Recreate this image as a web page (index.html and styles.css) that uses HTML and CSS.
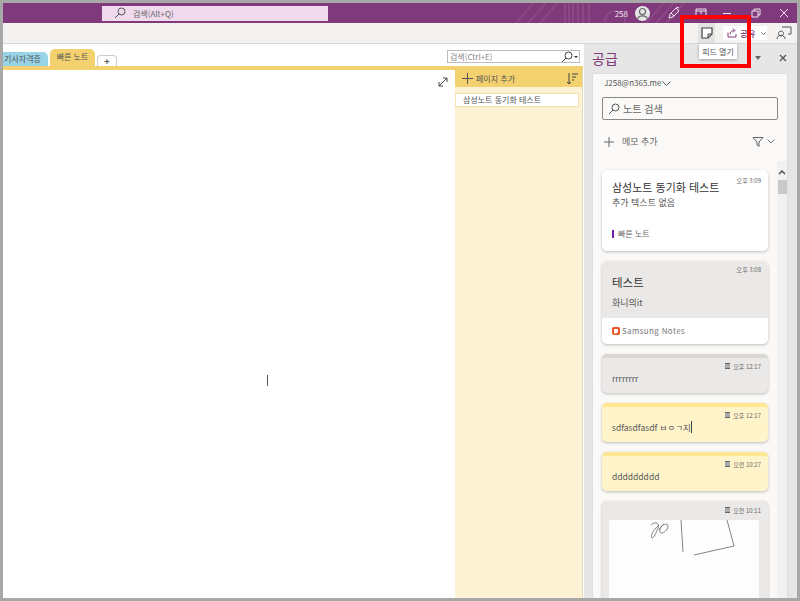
FILE: index.html
```html
<!DOCTYPE html>
<html lang="ko">
<head>
	<meta charset="utf-8">
	<title>OneNote</title>
	<link rel="stylesheet" href="styles.css">
</head>
<body>
	<div class="window">
		<div class="titlebar">
			<svg class="title-art" width="200" height="20" viewBox="0 0 200 20">
				<g fill="none" stroke="#8a4885" stroke-width="2">
					<path d="M10 24L34 -4M22 24L46 -4M34 24L58 -4"/>
					<path d="M62 0v20M66 0v20M70 0v20M75 0v20M80 0v20M86 0v20"/>
					<circle cx="112" cy="18" r="10"/>
					<path d="M140 24L164 -4M150 24L174 -4M160 24L184 -4"/>
				</g>
			</svg>
			<div class="title-search">
				<svg width="12" height="12" viewBox="0 0 12 12"><circle cx="7.5" cy="4.5" r="3.5" fill="none" stroke="#555" stroke-width="1"/><path d="M5 7L1 11" stroke="#555"/></svg>
				<span>검색(Alt+Q)</span>
			</div>
			<div class="title-right">
				<span class="user-name">258</span>
				<span class="avatar">
					<svg width="15" height="15" viewBox="0 0 15 15"><circle cx="7.5" cy="5.500" r="3" fill="none" stroke="#666" stroke-width="1.2"/><path d="M2.5 14c0-5.500 10-5.500 10 0" fill="none" stroke="#666" stroke-width="1.2"/></svg>
				</span>
				<svg class="pen" width="14" height="14" viewBox="0 0 14 14"><path d="M2 12l1-4 6-6 3 3-6 6zM9 1l3 1M4 7l3 3" fill="none" stroke="#f0e4ee"/></svg>
				<svg class="ribbon-toggle" width="12" height="10" viewBox="0 0 12 10"><path d="M1 1h10v8H1zM1 3h10M6 3v3" fill="none" stroke="#f0e4ee"/></svg>
				<span class="win-min"></span>
				<svg class="win-restore" width="10" height="10" viewBox="0 0 10 10"><path d="M1 3h6v6H1zM3 3V1h6v6H7" fill="none" stroke="#f0e4ee"/></svg>
				<svg class="win-close" width="10" height="10" viewBox="0 0 10 10"><path d="M1 1l8 8M9 1l-8 8" stroke="#f0e4ee"/></svg>
			</div>
		</div>

		<div class="ribbon">
			<span class="feed-btn">
				<svg width="12" height="12" viewBox="0 0 12 12"><path d="M1 1h10v6l-4 4H1z" fill="#fff" stroke="#444" stroke-width="1.2"/><path d="M11 7H7v4" fill="none" stroke="#444"/></svg>
			</span>
			<div class="share-btn">
				<svg width="10" height="10" viewBox="0 0 10 10"><path d="M1 4.500v4.500h8V6M3 6.500c0-2.500 2-4 4-4M6 .5l2 2-2 2" fill="none" stroke="#80397b"/></svg>
				<span>공유</span>
				<svg class="share-arrow" width="5" height="3" viewBox="0 0 5 3"><path d="M.5.5l2 2 2-2" fill="none" stroke="#666"/></svg>
			</div>
			<svg class="people" width="16" height="14" viewBox="0 0 16 14"><path d="M6 1h9v7h-3M5 5a2.500 2.500 0 1 0 .1 0M1 13c0-5 8-5 8 0" fill="none" stroke="#555"/></svg>
		</div>

		<div class="main">
			<div class="notebook">
				<div class="tabs">
					<div class="tab-list">
						<span class="tab tab-blue">기사자격증</span>
						<span class="tab tab-yellow">빠른 노트</span>
						<span class="tab tab-add">+</span>
					</div>
					<div class="page-search">
						<span>검색(Ctrl+E)</span>
						<svg width="12" height="12" viewBox="0 0 12 12"><circle cx="7.5" cy="4.5" r="3.5" fill="none" stroke="#444"/><path d="M5 7L1 11" stroke="#444"/></svg>
						<i></i>
					</div>
				</div>
				<div class="section-line"></div>
				<div class="section">
					<div class="page">
						<svg class="expand" width="10" height="10" viewBox="0 0 10 10"><path d="M1 9l8-8M5 1h4v4M1 5v4h4" fill="none" stroke="#444"/></svg>
						<span class="caret"></span>
					</div>
					<div class="pages">
						<div class="pages-head">
							<svg class="plus" width="11" height="11" viewBox="0 0 11 11"><path d="M5.500 0v11M0 5.500h11" stroke="#555"/></svg>
							<span class="add-page">페이지 추가</span>
							<svg width="12" height="12" viewBox="0 0 12 12"><path d="M3 0v11M1 9l2 2 2-2M6 1h6M6 4h4M6 7h2" fill="none" stroke="#444"/></svg>
						</div>
						<div class="page-item">삼성노트 동기화 테스트</div>
					</div>
				</div>
			</div>

			<div class="feed">
				<div class="feed-head">
					<span class="feed-title">공급</span>
					<i class="feed-menu"></i>
					<svg width="8" height="8" viewBox="0 0 8 8"><path d="M1 1l6 6M7 1L1 7" stroke="#555" stroke-width="1.3"/></svg>
				</div>
				<div class="feed-panel">
					<div class="account">J258@n365.me<svg width="9" height="5" viewBox="0 0 9 5"><path d="M.5.5l4 4 4-4" fill="none" stroke="#555"/></svg></div>
					<div class="note-search">
						<svg width="12" height="12" viewBox="0 0 12 12"><circle cx="7.5" cy="4.5" r="3.5" fill="none" stroke="#555"/><path d="M5 7L1 11" stroke="#555"/></svg>
						<span>노트 검색</span>
					</div>
					<div class="add-row">
						<svg class="add-plus" width="10" height="10" viewBox="0 0 10 10"><path d="M5 0v10M0 5h10" stroke="#666"/></svg>
						<span class="add-memo">메모 추가</span>
						<svg width="12" height="10" viewBox="0 0 12 10"><path d="M1 .5h10L7 5v4.500L5 8V5z" fill="none" stroke="#666"/></svg>
						<svg width="8" height="5" viewBox="0 0 8 5"><path d="M.5.5L4 4 7.500.5" fill="none" stroke="#777"/></svg>
					</div>
					<div class="feed-scroll">
						<div class="cards">
							<div class="card card-white">
								<p class="time">오후 3:09</p>
								<p class="card-title">삼성노트 동기화 테스트</p>
								<p class="card-sub">추가 텍스트 없음</p>
								<p class="card-source"><i class="mark"></i>빠른 노트</p>
							</div>
							<div class="card card-samsung">
								<div class="samsung-body">
									<p class="time">오후 3:08</p>
									<p class="card-title">테스트</p>
									<p class="card-sub">화니의it</p>
								</div>
								<div class="samsung-foot">
									<svg width="8" height="8" viewBox="0 0 8 8"><rect width="8" height="8" rx="2" fill="#e8562a"/><path d="M2 2h4v3L4.500 6.500H2z" fill="#fff"/></svg>
									<span>Samsung Notes</span>
								</div>
							</div>
							<div class="card card-sticky card-grey">
								<p class="time"><i class="note-ic"></i>오후 12:17</p>
								<p class="card-text">rrrrrrrr</p>
							</div>
							<div class="card card-sticky card-yellow">
								<p class="time"><i class="note-ic"></i>오후 12:17</p>
								<p class="card-text"><span class="typing">sdfasdfasdf ㅂㅇㄱ지</span></p>
							</div>
							<div class="card card-sticky card-yellow">
								<p class="time"><i class="note-ic"></i>오전 10:27</p>
								<p class="card-text">ddddddddd</p>
							</div>
							<div class="card card-ink">
								<p class="time"><i class="note-ic"></i>오전 10:11</p>
								<div class="ink-sheet">
									<svg width="150" height="80" viewBox="0 0 150 80">
										<g fill="none" stroke="#666" stroke-width=".8">
											<path d="M42 5c4-4 9-2 7 3-2 5-4 10-6 10-2-1 1-8 6-12"/>
											<path d="M50 10c2-5 9-8 9-4 0 5-7 9-8 6-1-3 2-7 4-8"/>
											<path d="M72 0l2 32"/>
											<path d="M118 0l7 26-40 9"/>
										</g>
									</svg>
								</div>
							</div>
						</div>
						<div class="scrollbar">
							<svg width="8" height="5" viewBox="0 0 8 5"><path d="M1 4l3-3 3 3" fill="none" stroke="#555" stroke-width="1.500"/></svg>
							<i class="thumb"></i>
						</div>
					</div>
				</div>
			</div>
		</div>

		<div class="highlight"></div>
		<div class="tooltip">피드 열기</div>
	</div>
</body>
</html>
```

FILE: styles.css
```css
html, body {
	width: 800px;
	height: 601px;
	margin: 0;
	overflow: hidden;
	font-family: "Noto Sans CJK KR", "Noto Sans", sans-serif;
	color: #444;
}

p {
	margin: 0;
}

.window {
	position: relative;
	width: 800px;
	height: 601px;
	box-sizing: border-box;
	border: 3px solid #a8a8a8;
	display: flex;
	flex-direction: column;
	background: #fff;
	overflow: hidden;
}

/* title bar */
.titlebar {
	position: relative;
	height: 20px;
	flex-shrink: 0;
	background: #80397b;
	display: flex;
	align-items: center;
	justify-content: space-between;
	padding-left: 99px;
}

.title-art {
	position: absolute;
	top: 0;
	left: 500px;
}

.title-search {
	position: relative;
	width: 226px;
	height: 15px;
	background: #f0dbee;
	display: flex;
	align-items: center;
	font-size: 8px;
	color: #666;
}

.title-search svg {
	margin-left: 12px;
	margin-right: 7px;
}

.title-right {
	position: relative;
	display: flex;
	align-items: center;
	color: #f0e4ee;
	font-size: 8px;
}

.user-name {
	margin-right: 7px;
}

.avatar {
	width: 15px;
	height: 15px;
	border-radius: 50%;
	background: #e6e6e6;
	display: flex;
	overflow: hidden;
	margin-right: 17px;
}

.pen {
	margin-right: 14px;
}

.ribbon-toggle {
	margin-right: 16px;
}

.win-min {
	width: 8px;
	height: 1px;
	background: #f0e4ee;
	margin-right: 20px;
}

.win-restore {
	margin-right: 18px;
}

.win-close {
	margin-right: 8px;
}

/* ribbon */
.ribbon {
	height: 20px;
	flex-shrink: 0;
	background: #f3f2f1;
	display: flex;
	align-items: center;
	justify-content: flex-end;
	box-shadow: 0 1px 1px #d8d8d8;
	position: relative;
	padding-right: 5px;
}

.feed-btn {
	width: 17px;
	height: 20px;
	background: #e4e3e2;
	display: flex;
	align-items: center;
	justify-content: center;
	margin-right: 8px;
}

.share-btn {
	width: 44px;
	height: 14px;
	background: #fff;
	display: flex;
	align-items: center;
	padding-left: 4px;
	box-sizing: border-box;
	font-size: 8.5px;
	font-weight: 500;
	color: #80397b;
	white-space: nowrap;
	margin-right: 9px;
}

.share-btn svg {
	flex-shrink: 0;
}

.share-btn span {
	margin-left: 3px;
}

.share-btn .share-arrow {
	margin-left: 5px;
}

/* notebook */
.main {
	flex: 1;
	display: flex;
	min-height: 0;
}

.notebook {
	width: 580px;
	display: flex;
	flex-direction: column;
	flex-shrink: 0;
}

.tabs {
	height: 23px;
	flex-shrink: 0;
	display: flex;
	justify-content: space-between;
	align-items: flex-end;
	padding-right: 3px;
}

.tab-list {
	display: flex;
	align-items: flex-end;
}

.tab {
	font-size: 8px;
	color: #555;
	display: block;
	text-align: center;
	border-radius: 4px 4px 0 0;
}

.tab-blue {
	width: 45px;
	height: 14px;
	line-height: 14px;
	background: #98d3e6;
	border-radius: 0 5px 0 0;
	box-sizing: border-box;
	padding-right: 6px;
}

.tab-yellow {
	width: 45px;
	height: 17px;
	line-height: 15px;
	background: #f3d16f;
	margin-left: 2px;
	border-radius: 5px 5px 0 0;
}

.tab-add {
	width: 20px;
	height: 11px;
	line-height: 11px;
	box-sizing: border-box;
	border: 1px solid #ccc;
	border-bottom: 0;
	margin-left: 2px;
	font-weight: bold;
	font-size: 9px;
}

.page-search {
	width: 133px;
	height: 13px;
	box-sizing: border-box;
	border: 1px solid #bbb;
	background: #fff;
	margin-bottom: 3px;
	display: flex;
	align-items: center;
	padding-left: 2px;
	font-size: 8px;
	color: #888;
}

.page-search span {
	flex: 1;
}

.page-search i {
	width: 0;
	height: 0;
	border: 2px solid transparent;
	border-top: 2px solid #333;
	margin: 2px 1px 0 1px;
}

.section-line {
	height: 4px;
	flex-shrink: 0;
	background: #f3d16f;
}

.section {
	flex: 1;
	display: flex;
	min-height: 0;
}

.page {
	position: relative;
	width: 452px;
	flex-shrink: 0;
	background: #fff;
}

.expand {
	position: absolute;
	top: 7px;
	right: 7px;
}

.caret {
	position: absolute;
	top: 305px;
	left: 264px;
	width: 1px;
	height: 11px;
	background: #555;
}

.pages {
	flex: 1;
	background: #fdf3d4;
	border-right: 1px solid #e2d9bd;
}

.pages-head {
	height: 17px;
	background: #f3d16f;
	display: flex;
	align-items: center;
	padding: 0 4px 0 7px;
	font-size: 8px;
	color: #555;
}

.plus {
	margin-right: 3px;
}

.add-page {
	flex: 1;
}

.page-item {
	height: 14px;
	line-height: 12px;
	box-sizing: border-box;
	margin: 6px 3px 0 0;
	padding-left: 7px;
	background: #fff;
	border: 1px solid #f3e3ae;
	font-size: 8px;
	color: #555;
}

/* feed pane */
.feed {
	flex: 1;
	background: #e6e6e6;
	display: flex;
	flex-direction: column;
	min-width: 0;
	padding: 0 9px 0 8px;
	margin-left: 1px;
}

.feed-head {
	height: 30px;
	flex-shrink: 0;
	display: flex;
	align-items: center;
	justify-content: flex-end;
	padding-right: 1px;
}

.feed-title {
	flex: 1;
	font-size: 14px;
	color: #80397b;
}

.feed-menu {
	width: 0;
	height: 0;
	border: 3px solid transparent;
	border-top: 4px solid #666;
	margin: 3px 18px 0 0;
}

.feed-panel {
	flex: 1;
	min-height: 0;
	box-sizing: border-box;
	background: #faf9f8;
	border: 1px solid #dedede;
	border-bottom: 0;
	padding-left: 9px;
	display: flex;
	flex-direction: column;
	overflow: hidden;
}

.account {
	height: 17px;
	line-height: 17px;
	font-size: 8px;
	color: #555;
	padding-left: 2px;
	flex-shrink: 0;
}

.account svg {
	margin-left: 1px;
}

.note-search {
	width: 176px;
	height: 23px;
	box-sizing: border-box;
	margin-top: 6px;
	flex-shrink: 0;
	border: 1px solid #8a8886;
	border-radius: 2px;
	display: flex;
	align-items: center;
	padding-left: 5px;
	font-size: 10px;
	color: #666;
}

.note-search svg {
	margin-right: 3px;
}

.add-row {
	height: 21px;
	margin-top: 11px;
	width: 173px;
	flex-shrink: 0;
	display: flex;
	align-items: center;
	font-size: 9px;
	color: #666;
}

.add-plus {
	margin-left: 2px;
	margin-right: 8px;
}

.add-memo {
	flex: 1;
}

.add-row svg:last-child {
	margin-left: 3px;
}

.feed-scroll {
	flex: 1;
	min-height: 0;
	margin-top: 9px;
	display: flex;
	align-items: flex-start;
}

.cards {
	width: 166px;
	padding-top: 9px;
	flex-shrink: 0;
	display: flex;
	flex-direction: column;
	gap: 10px;
}

.scrollbar {
	width: 10px;
	height: 440px;
	flex-shrink: 0;
	margin-left: 9px;
	background: #f1f1f1;
	display: flex;
	flex-direction: column;
	align-items: center;
	padding-top: 9px;
	box-sizing: border-box;
}

.thumb {
	width: 9px;
	height: 14px;
	margin-top: 5px;
	background: #c9c9c9;
}

.card {
	box-sizing: border-box;
	border-radius: 5px;
	box-shadow: 0 1px 3px rgba(0, 0, 0, 0.25);
	flex-shrink: 0;
	overflow: hidden;
}

.time {
	font-size: 6px;
	color: #666;
	text-align: right;
	line-height: 8px;
	padding: 7px 7px 0 0;
}

.note-ic {
	display: inline-block;
	width: 5px;
	height: 4px;
	margin-right: 3px;
	border-top: 1px solid #666;
	border-bottom: 1px solid #666;
	background: #aaa;
}

.card-white {
	height: 81px;
	background: #fff;
}

.card-title {
	font-size: 11px;
	line-height: 14px;
	color: #333;
	padding-left: 10px;
}

.card-sub {
	font-size: 9px;
	line-height: 13px;
	color: #555;
	padding-left: 10px;
}

.card-white .card-title {
	margin-top: -5px;
}

.card-white .card-sub {
	margin-top: 2px;
}

.card-source {
	margin-top: 20px;
	padding-left: 10px;
	font-size: 8px;
	line-height: 10px;
	color: #666;
	display: flex;
	align-items: center;
}

.mark {
	width: 2px;
	height: 8px;
	background: #7719aa;
	margin-right: 4px;
}

.card-samsung {
	height: 83px;
	background: #fff;
}

.samsung-body {
	height: 57px;
	box-sizing: border-box;
	background: #ebe9e7;
}

.samsung-body .time {
	padding-top: 5px;
}

.samsung-body .card-title {
	margin-top: 1px;
	font-size: 11.5px;
}

.samsung-body .card-sub {
	margin-top: 7px;
}

.samsung-foot {
	height: 25px;
	display: flex;
	align-items: center;
	padding-left: 10px;
	font-size: 8px;
	letter-spacing: 0.35px;
	color: #777;
}

.samsung-foot svg {
	margin-right: 2px;
}

.card-sticky {
	height: 39px;
	border-top: 4px solid;
}

.card-sticky .time {
	padding-top: 5px;
}

.card-text {
	font-size: 8.5px;
	line-height: 12px;
	color: #555;
	padding: 1px 0 0 10px;
}

.typing {
	border-right: 1px solid #444;
}

.card-grey {
	background: #ebe9e7;
	border-top-color: #dad8d6;
}

.card-yellow {
	background: #fff4c9;
	border-top-color: #ffe88f;
}

.card-ink {
	height: 120px;
	background: #ebe9e7;
	padding: 0 0 0 7px;
}

.card-ink .time {
	padding-top: 6px;
}

.ink-sheet {
	width: 150px;
	height: 90px;
	margin-top: 5px;
	background: #fdfdfd;
	border-radius: 2px 2px 0 0;
}

/* overlays */
.highlight {
	position: absolute;
	top: 12px;
	left: 677px;
	width: 71px;
	height: 53px;
	box-sizing: border-box;
	border: 4px solid #ff0000;
}

.tooltip {
	position: absolute;
	top: 41px;
	left: 696px;
	width: 38px;
	height: 15px;
	line-height: 15px;
	text-align: center;
	background: #fff;
	font-size: 8px;
	color: #555;
	box-shadow: 0 1px 3px rgba(0, 0, 0, 0.3);
}
```
